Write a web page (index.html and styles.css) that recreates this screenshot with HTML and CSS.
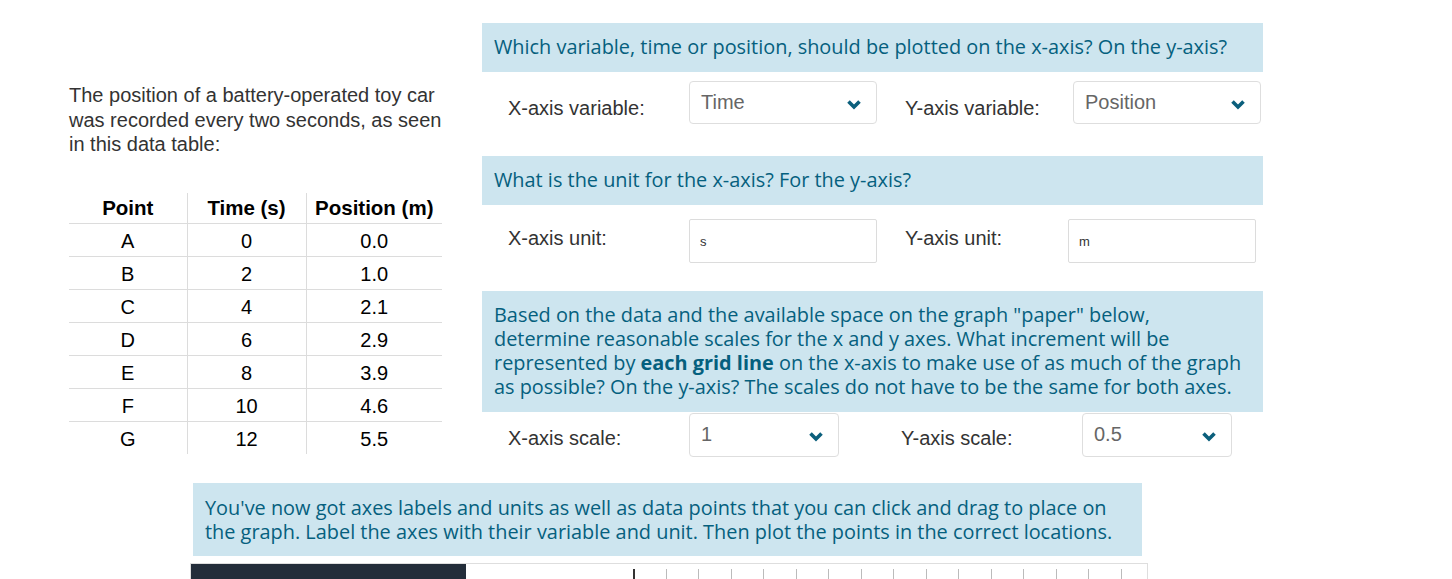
FILE: index.html
```html
<!DOCTYPE html>
<html lang="en">
<head>
<meta charset="utf-8">
<title>Graphing position vs time</title>
<link rel="stylesheet" href="styles.css">
</head>
<body>
<div class="page">
  <div class="top">
    <div class="left">
      <p class="intro">The position of a battery-operated toy car was recorded every two seconds, as seen in this data table:</p>
      <table class="data">
        <thead>
          <tr><th class="c1">Point</th><th class="c2">Time (s)</th><th class="c3">Position (m)</th></tr>
        </thead>
        <tbody>
          <tr><td>A</td><td>0</td><td>0.0</td></tr>
          <tr><td>B</td><td>2</td><td>1.0</td></tr>
          <tr><td>C</td><td>4</td><td>2.1</td></tr>
          <tr><td>D</td><td>6</td><td>2.9</td></tr>
          <tr><td>E</td><td>8</td><td>3.9</td></tr>
          <tr><td>F</td><td>10</td><td>4.6</td></tr>
          <tr><td>G</td><td>12</td><td>5.5</td></tr>
        </tbody>
      </table>
    </div>
    <div class="right">
      <div class="prompt">Which variable, time or position, should be plotted on the x-axis? On the y-axis?</div>
      <div class="row row-var">
        <span class="label l1">X-axis variable:</span>
        <div class="select s-var"><span class="val">Time</span><svg class="chev" viewBox="0 0 16 11" width="16" height="11"><polyline points="2.5,2.5 8,8 13.5,2.5" fill="none" stroke="#0b5f7c" stroke-width="3.6"/></svg></div>
        <span class="label l2">Y-axis variable:</span>
        <div class="select s-var"><span class="val">Position</span><svg class="chev" viewBox="0 0 16 11" width="16" height="11"><polyline points="2.5,2.5 8,8 13.5,2.5" fill="none" stroke="#0b5f7c" stroke-width="3.6"/></svg></div>
      </div>
      <div class="prompt">What is the unit for the x-axis? For the y-axis?</div>
      <div class="row row-unit">
        <span class="label l1">X-axis unit:</span>
        <div class="input">s</div>
        <span class="label l2u">Y-axis unit:</span>
        <div class="input">m</div>
      </div>
      <div class="prompt">Based on the data and the available space on the graph "paper" below,<br>determine reasonable scales for the x and y axes. What increment will be<br>represented by <b>each grid line</b> on the x-axis to make use of as much of the graph<br>as possible? On the y-axis? The scales do not have to be the same for both axes.</div>
      <div class="row row-scale">
        <span class="label l1">X-axis scale:</span>
        <div class="select s-scale"><span class="val">1</span><svg class="chev" viewBox="0 0 16 11" width="16" height="11"><polyline points="2.5,2.5 8,8 13.5,2.5" fill="none" stroke="#0b5f7c" stroke-width="3.6"/></svg></div>
        <span class="label l2s">Y-axis scale:</span>
        <div class="select s-scale"><span class="val">0.5</span><svg class="chev" viewBox="0 0 16 11" width="16" height="11"><polyline points="2.5,2.5 8,8 13.5,2.5" fill="none" stroke="#0b5f7c" stroke-width="3.6"/></svg></div>
      </div>
    </div>
  </div>
  <div class="bottom">
    <div class="prompt wide">You've now got axes labels and units as well as data points that you can click and drag to place on<br>the graph. Label the axes with their variable and unit. Then plot the points in the correct locations.</div>
    <div class="graph">
      <div class="panel"></div>
      <svg class="ticks" width="681" height="16" viewBox="0 0 681 16">
        <rect x="167" y="5" width="2" height="11" fill="#333"/>
        <rect x="200" y="5" width="1" height="11" fill="#bbb"/>
        <rect x="232" y="5" width="1" height="11" fill="#bbb"/>
        <rect x="265" y="5" width="1" height="11" fill="#bbb"/>
        <rect x="297" y="5" width="1" height="11" fill="#bbb"/>
        <rect x="330" y="5" width="1" height="11" fill="#bbb"/>
        <rect x="362" y="5" width="1" height="11" fill="#bbb"/>
        <rect x="395" y="5" width="1" height="11" fill="#bbb"/>
        <rect x="427" y="5" width="1" height="11" fill="#bbb"/>
        <rect x="460" y="5" width="1" height="11" fill="#bbb"/>
        <rect x="492" y="5" width="1" height="11" fill="#bbb"/>
        <rect x="525" y="5" width="1" height="11" fill="#bbb"/>
        <rect x="557" y="5" width="1" height="11" fill="#bbb"/>
        <rect x="590" y="5" width="1" height="11" fill="#bbb"/>
        <rect x="622" y="5" width="1" height="11" fill="#bbb"/>
        <rect x="655" y="5" width="1" height="11" fill="#bbb"/>
      </svg>
    </div>
  </div>
</div>
</body>
</html>
```
FILE: styles.css
```css
html, body {
  margin: 0;
  padding: 0;
  background: #fff;
}
body {
  font-family: "Liberation Sans", Arial, sans-serif;
  color: #333;
}
.page {
  width: 1452px;
}
.top {
  display: flex;
  align-items: flex-start;
}
.left {
  margin-left: 69px;
  width: 375px;
  padding-top: 83px;
}
.intro {
  margin: 0;
  font-size: 20px;
  line-height: 24.5px;
  color: #333;
}
.data {
  margin-top: 36px;
  border-collapse: collapse;
  width: 373px;
  font-size: 20px;
  color: #000;
  table-layout: fixed;
}
.data th, .data td {
  text-align: center;
  padding: 0;
  border-bottom: 1px solid #dcdcdc;
  border-left: 1px solid #dcdcdc;
}
.data th:first-child, .data td:first-child {
  border-left: none;
}
.data tbody tr:last-child td {
  border-bottom: none;
}
.data th {
  height: 31px;
  font-weight: bold;
  font-size: 20.5px;
  padding-top: 1px;
  box-sizing: border-box;
}
.data td {
  height: 30px;
  padding-top: 2px;
}
.data .c1 { width: 118px; }
.data .c2 { width: 119px; }
.data .c3 { width: 136px; }

.right {
  margin-left: 38px;
  width: 781px;
  padding-top: 23px;
}
.prompt {
  background: #cde5ef;
  color: #05607e;
  font-family: "Open Sans", sans-serif;
  font-size: 19.9px;
  line-height: 24px;
  padding: 12px 12px 13px 12px;
  white-space: nowrap;
}
.prompt b {
  font-weight: 700;
}
.row {
  display: flex;
  align-items: flex-start;
  font-size: 20px;
  box-sizing: border-box;
}
.row-var { height: 84px; padding-top: 9px; }
.row-unit { height: 86px; padding-top: 14px; }
.row-scale { height: 71px; padding-top: 1px; }

.label {
  color: #333;
  line-height: 24px;
  box-sizing: border-box;
  flex: none;
}
.l1 {
  width: 207px;
  padding-left: 26px;
}
.row-var .label { padding-top: 15px; }
.row-unit .label { padding-top: 7px; }
.row-scale .label { padding-top: 13px; }
.l2 { margin-left: 28px; width: 168px; }
.l2u { margin-left: 28px; width: 163px; }
.l2s { margin-left: 62px; width: 181px; }

.select {
  flex: none;
  display: flex;
  justify-content: space-between;
  box-sizing: border-box;
  border: 1px solid #dedede;
  border-radius: 4px;
  background: #fff;
  height: 43px;
  padding: 8px 14px 0 11px;
  color: #666;
  line-height: 24px;
}
.select .chev {
  margin-top: 9px;
}
.s-var { width: 188px; }
.s-scale { width: 150px; height: 44px; }
.input {
  flex: none;
  box-sizing: border-box;
  width: 188px;
  height: 44px;
  border: 1px solid #dcdcdc;
  border-radius: 2px;
  font-size: 13px;
  color: #333;
  padding: 14px 0 0 10px;
  line-height: 16px;
}

.wide {
  margin-left: 193px;
  width: 949px;
  box-sizing: border-box;
  padding-top: 13px;
  padding-bottom: 12px;
}
.graph {
  margin-left: 190px;
  margin-top: 7px;
  width: 958px;
  height: 40px;
  box-sizing: border-box;
  border: 1px solid #dedede;
  display: flex;
  align-items: flex-start;
}
.panel {
  width: 275px;
  height: 40px;
  background: #232d3a;
}
.ticks {
  display: block;
}
```
